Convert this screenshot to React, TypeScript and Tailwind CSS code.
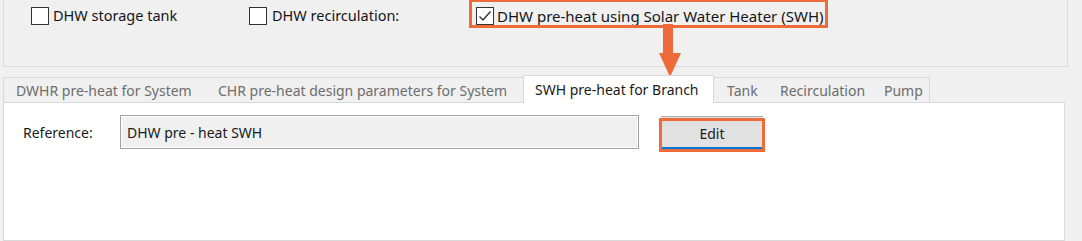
import React from "react"

const ORANGE = "#ee6a39"

function Checkbox({ checked = false }: { checked?: boolean }) {
  return (
    <span className="w-[18px] h-[18px] shrink-0 border border-[#333333] bg-white flex items-center justify-center">
      {checked && (
        <svg width="14" height="12" viewBox="0 0 14 12">
          <path d="M1.5 6.5 L5 10 L12.5 1.5" fill="none" stroke="#333333" strokeWidth="1.4" />
        </svg>
      )}
    </span>
  )
}

export default function App() {
  const leftTabs = [
    { label: "DWHR pre-heat for System", w: "w-[203px]", pl: "pl-[12px]" },
    { label: "CHR pre-heat design parameters for System", w: "w-[316px]", pl: "pl-[11px]" },
  ]
  const rightTabs = [
    { label: "Tank", w: "w-[57px]", pl: "pl-[13px]" },
    { label: "Recirculation", w: "w-[105px]", pl: "pl-[9px]" },
    { label: "Pump", w: "w-[53px]", pl: "pl-[8px]" },
  ]

  return (
    <div className="relative w-[1082px] h-[241px] overflow-hidden bg-[#f0f0f0] text-[14px] text-[#1a1a1a] font-['Noto_Sans',sans-serif] flex flex-col">
      {/* group box with checkboxes */}
      <div className="ml-[3px] w-[1065px] h-[67px] shrink-0 border-l border-r border-b border-[#dadada]">
        <div className="flex items-center h-[18px] mt-[7px] ml-[27px] text-[#141420]">
          <div className="w-[218px] flex items-center gap-[4px] text-[14.5px]">
            <Checkbox />
            <span>DHW storage tank</span>
          </div>
          <div className="w-[227px] flex items-center gap-[5px] text-[14.5px]">
            <Checkbox />
            <span>DHW recirculation:</span>
          </div>
          <div className="relative flex items-center gap-[3px] text-[15px]">
            <Checkbox checked />
            <span>DHW pre-heat using Solar Water Heater (SWH)</span>
            <span className="absolute left-[-7px] right-[-4px] top-[-6px] bottom-[-1px] border-[3px] border-[#ee6a39]" />
          </div>
        </div>
      </div>

      {/* tabs */}
      <div className="mt-[8px] ml-[3px] flex items-end h-[27px] shrink-0">
        <div className="flex h-[25px] border-t border-l border-[#d9d9d9]">
          {leftTabs.map(t => (
            <div key={t.label} className={`${t.w} ${t.pl} flex items-center text-[#6d6d6d] whitespace-nowrap`}>
              {t.label}
            </div>
          ))}
        </div>
        <div className="relative z-10 w-[191px] h-[28px] mb-[-1px] bg-white border-t border-l border-r border-[#d9d9d9] pl-[11px] flex items-center text-[#1a1a1a] whitespace-nowrap">
          SWH pre-heat for Branch
        </div>
        <div className="flex h-[25px] border-t border-r border-[#d9d9d9]">
          {rightTabs.map(t => (
            <div key={t.label} className={`${t.w} ${t.pl} flex items-center text-[#6d6d6d] whitespace-nowrap`}>
              {t.label}
            </div>
          ))}
        </div>
      </div>

      {/* panel */}
      <div className="ml-[3px] w-[1062px] flex-1 bg-white border border-[#d9d9d9]">
        <div className="flex items-start mt-[12px] ml-[19px]">
          <div className="w-[97px] h-[34px] flex items-center">Reference:</div>
          <div className="w-[519px] h-[34px] bg-[#f0f0f0] border border-[#a0a0a0] shadow-[inset_1px_1px_0_#ffffff,inset_-1px_-1px_0_#ffffff] pl-[6px] flex items-center">
            DHW pre - heat SWH
          </div>
          <div className="relative ml-[22px] mt-[1px]">
            <div className="w-[102px] h-[33px] bg-[#e1e1e1] border-t border-[#adadad] border-b-2 border-b-[#0078d7] flex items-center justify-center pt-[3px]">
              Edit
            </div>
            <span className="absolute left-[-2px] top-[2px] w-[106px] h-[34px] border-[3px] border-[#ee6a39]" />
          </div>
        </div>
      </div>

      {/* annotation arrow */}
      <svg className="absolute left-[659px] top-[24px]" width="22" height="53" viewBox="0 0 22 53">
        <rect x="4" y="0" width="10" height="30" fill={ORANGE} />
        <polygon points="0,29 22,29 11,53" fill={ORANGE} />
      </svg>
    </div>
  )
}
